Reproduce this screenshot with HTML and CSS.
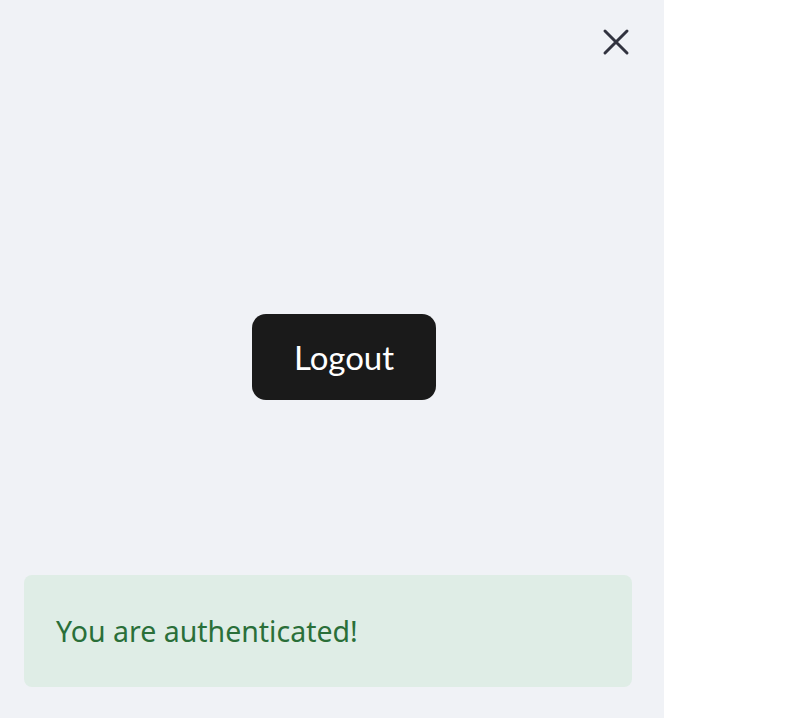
FILE: index.html
```html
<!DOCTYPE html>
<html lang="en">
<head>
<meta charset="utf-8">
<title>Logout</title>
<link rel="stylesheet" href="styles.css">
</head>
<body>
<div class="page">
  <aside class="sidebar">
    <div class="sidebar-header">
      <button class="close-btn" aria-label="Close">
        <svg width="28" height="28" viewBox="0 0 28 28" aria-hidden="true">
          <path d="M3 3 L25 25 M25 3 L3 25" stroke="#31333f" stroke-width="3" stroke-linecap="round" fill="none"/>
        </svg>
      </button>
    </div>
    <div class="action-row">
      <button class="logout-btn">Logout</button>
    </div>
    <div class="alert-success">You are authenticated!</div>
  </aside>
  <main class="main"></main>
</div>
</body>
</html>
```
FILE: styles.css
```css
html, body {
  margin: 0;
  padding: 0;
  height: 100%;
  background: #ffffff;
}
.page {
  display: flex;
  width: 788px;
  height: 718px;
}
.sidebar {
  width: 664px;
  height: 718px;
  background: #f0f2f6;
  display: flex;
  flex-direction: column;
  box-sizing: border-box;
  padding: 0 32px 31px 24px;
}
.sidebar-header {
  display: flex;
  justify-content: flex-end;
  padding-top: 22px;
  height: 40px;
  margin-right: -4px;
}
.close-btn {
  width: 40px;
  height: 40px;
  border: none;
  background: transparent;
  padding: 0;
  display: flex;
  align-items: center;
  justify-content: center;
  cursor: pointer;
}
.action-row {
  display: flex;
  justify-content: center;
  margin-right: -32px;
  margin-top: 252px;
}
.logout-btn {
  width: 184px;
  height: 86px;
  border: none;
  border-radius: 14px;
  background: #1a1a1a;
  color: #ffffff;
  font-family: Lato, "Noto Sans", sans-serif;
  font-size: 33px;
  padding: 0;
}
.alert-success {
  margin-top: auto;
  height: 112px;
  box-sizing: border-box;
  border-radius: 8px;
  background: #dfede6;
  color: #2a6f39;
  font-family: "Noto Sans", sans-serif;
  font-size: 28.5px;
  display: flex;
  align-items: center;
  padding: 0 32px;
}
.main {
  flex: 1;
  background: #ffffff;
}
```
